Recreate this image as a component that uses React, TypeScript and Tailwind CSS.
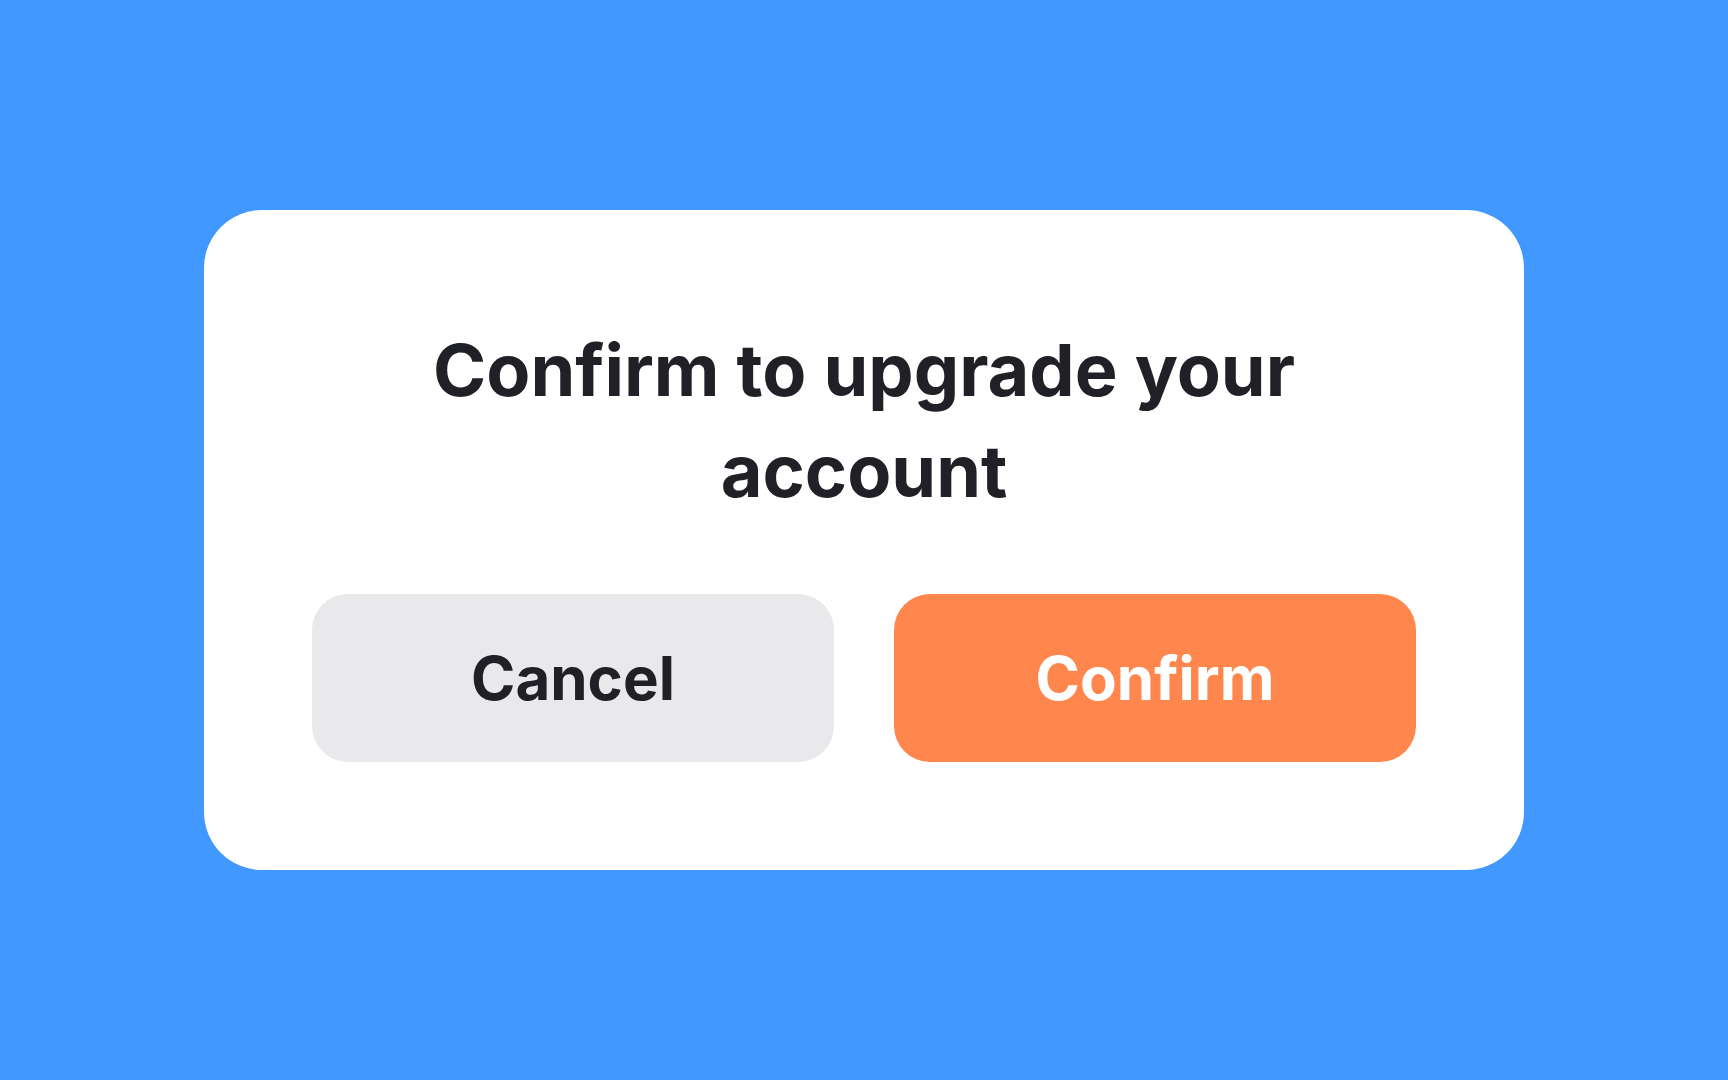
export default function App() {
  return (
    <div className="min-h-screen w-full bg-[#4198ff] flex items-center justify-center font-['Inter',sans-serif]">
      <div className="w-[1320px] bg-white rounded-[58px] px-[108px] pt-[110px] pb-[108px] flex flex-col items-center gap-[72px]">
        <h1 className="text-[72px] leading-[1.4] font-bold text-[#202027] text-center">
          Confirm to upgrade your account
        </h1>
        <div className="w-full grid grid-cols-2 gap-[60px]">
          <button className="h-[168px] rounded-[36px] bg-[#e9e9eb] text-[#202027] text-[60px] font-bold">
            Cancel
          </button>
          <button className="h-[168px] rounded-[36px] bg-[#ff874d] text-white text-[60px] font-bold">
            Confirm
          </button>
        </div>
      </div>
    </div>
  );
}
